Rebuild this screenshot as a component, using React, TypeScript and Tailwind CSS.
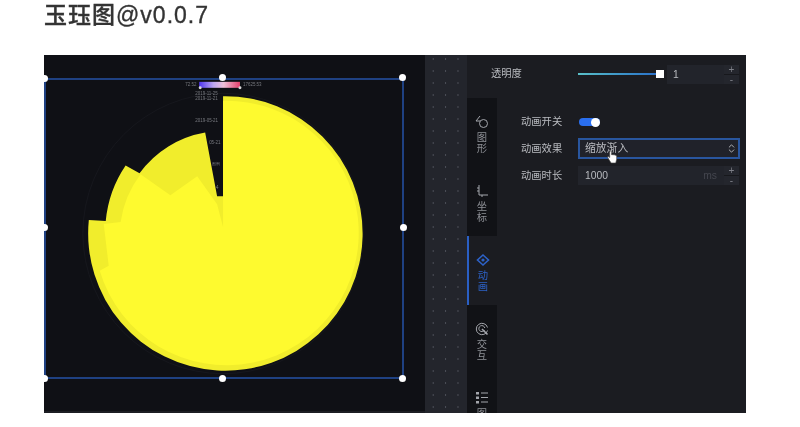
import React from "react";
import { ChevronsUpDown } from "lucide-react";

const handles = [
  "left-[-5px] top-[-5px]",
  "left-[173px] top-[-6px]",
  "right-[-4px] top-[-6px]",
  "left-[-5px] top-[144px]",
  "right-[-5px] top-[144px]",
  "left-[-5px] bottom-[-5px]",
  "left-[173px] bottom-[-5px]",
  "right-[-4px] bottom-[-5px]",
];

const ChartDrawing = () => (
  <svg viewBox="44 55 381 358" className="absolute inset-0 h-full w-full">
    <defs>
      <linearGradient id="legend" x1="0" x2="1" y1="0" y2="0">
        <stop offset="0" stopColor="#4f35ee" />
        <stop offset="0.35" stopColor="#bda6f0" />
        <stop offset="0.6" stopColor="#efc0d8" />
        <stop offset="1" stopColor="#e6406c" />
      </linearGradient>
    </defs>
    <circle cx="223" cy="234.5" r="141" fill="none" stroke="#16171d" strokeWidth="1" />
    <path
      d="M223 197 L223 96.5 A138 138 0 1 1 88 221 L105 222 A119 119 0 0 1 125 166 L139 174 A103 103 0 0 1 205 133 L217 197 Z"
      fill="#f1ed2c"
    />
    <path
      d="M223 228 L223 101 A133 133 0 1 1 99 272 L108 267 L103 225 L120 223 A104 104 0 0 1 140 175 L170 196 L197 177 L217 205 Z"
      fill="#fefa2f"
    />
    <rect x="199" y="82" width="41" height="6" fill="url(#legend)" />
    <circle cx="200" cy="88" r="1.5" fill="#d8d8d8" />
    <circle cx="240" cy="88" r="1.5" fill="#d8d8d8" />
    <g fill="#77797f" fontSize="4.5" fontFamily="'Liberation Sans', sans-serif">
      <text x="185" y="86.5">72.52</text>
      <text x="243" y="86.5">17625.53</text>
      <text x="195" y="95.5">2019-11-25</text>
      <text x="195" y="100.5">2019-11-21</text>
      <text x="195" y="122.5">2019-05-21</text>
      <text x="209" y="145">05-21</text>
      <text x="212" y="166">图例</text>
      <text x="216" y="189.5">4</text>
    </g>
  </svg>
);

const ShapeIcon = () => (
  <svg viewBox="0 0 14 14" className="h-[14px] w-[14px]" fill="none" stroke="#a4a6ac" strokeWidth="1">
    <path d="M5 1 L1 6 H5" />
    <circle cx="8.5" cy="8.5" r="4" />
  </svg>
);

const AxisIcon = () => (
  <svg viewBox="0 0 14 14" className="h-[14px] w-[14px]" fill="none" stroke="#a4a6ac" strokeWidth="1">
    <path d="M4 1 V11 H13 M2 4 H4 M2 7 H4 M7 11 V13" />
  </svg>
);

const MotionIcon = () => (
  <svg viewBox="0 0 14 14" className="h-[14px] w-[14px]" fill="none" stroke="#2d62c8" strokeWidth="1.6">
    <path d="M7 2 L12.5 7 L7 12 L1.5 7 Z" />
    <circle cx="7" cy="7" r="1.6" fill="#2d62c8" stroke="none" />
  </svg>
);

const TargetIcon = () => (
  <svg viewBox="0 0 14 14" className="h-[14px] w-[14px]" fill="none" stroke="#a4a6ac" strokeWidth="1">
    <path d="M12.5 8.5 A5.7 5.7 0 1 1 12.5 5.5" />
    <path d="M9.5 8 A3 3 0 1 1 9.8 6" />
    <path d="M7 7 L12.5 12.5" strokeWidth="1.6" />
  </svg>
);

const ListIcon = () => (
  <svg viewBox="0 0 14 14" className="h-[14px] w-[14px]" fill="#a4a6ac">
    <rect x="1" y="1" width="3" height="2.5" />
    <rect x="6" y="1.5" width="7" height="1" />
    <rect x="1" y="5.5" width="3" height="2.5" />
    <rect x="6" y="6" width="7" height="1" />
    <rect x="1" y="10" width="3" height="2.5" />
    <rect x="6" y="10.5" width="7" height="1" />
  </svg>
);

const HandCursor = () => (
  <svg viewBox="0 0 14 15" className="absolute left-[26px] top-[10px] h-[14px] w-[13px]">
    <path
      d="M4.5 1 L5.5 1 L6 2 V5 L7.5 5 L9 5.2 L10.5 5.5 L11.5 6.5 V10 L10.5 14 H5.5 L3 10 L1.5 7.5 L2.5 7 L4 8 V2 Z"
      fill="#ffffff"
      stroke="#444444"
      strokeWidth="0.7"
    />
  </svg>
);

const tabs = [
  { label: "图形", icon: <ShapeIcon />, active: false },
  { label: "坐标", icon: <AxisIcon />, active: false },
  { label: "动画", icon: <MotionIcon />, active: true },
  { label: "交互", icon: <TargetIcon />, active: false },
  { label: "图例", icon: <ListIcon />, active: false },
];

const Stepper = () => (
  <div className="flex w-[15px] flex-col bg-[#24262d] text-center text-[10px] leading-[9px] text-[#7d7f87]">
    <span className="flex-1 border-b border-[#17181c]">+</span>
    <span className="flex-1">-</span>
  </div>
);

export default function App() {
  return (
    <div className="h-[427px] w-[800px] overflow-hidden bg-white font-['Liberation_Sans','Noto_Sans_CJK_SC',sans-serif] blur-[0.4px]">
      <h1 className="ml-[44px] h-[55px] text-[23px] leading-[30px] font-medium tracking-[1px] text-[#333333] [-webkit-text-stroke:0.35px_#333333]">
        玉珏图@v0.0.7
      </h1>

      <div className="ml-[44px] flex h-[358px] w-[702px] overflow-hidden">
        <div className="relative w-[381px] border-b-[2px] border-[#1c1d23] bg-[#0f1015]">
          <ChartDrawing />
          <div className="absolute left-[0px] top-[23px] h-[301px] w-[360px] border-2 border-[#1f4182]">
            {handles.map((pos) => (
              <span key={pos} className={`absolute h-[7px] w-[7px] rounded-full bg-white ${pos}`} />
            ))}
          </div>
        </div>

        <div className="w-[42px] bg-[#23252c] bg-[radial-gradient(circle,#4d5059_0.8px,transparent_1px)] bg-[size:12.4px_12px] bg-[position:2px_-2px]" />

        <div className="flex flex-1 flex-col bg-[#1b1c21] text-[10.3px] text-[#b9bbc0]">
          <div className="flex h-[43px] shrink-0 items-center pb-[5px]">
            <span className="ml-[24px] w-[87px]">透明度</span>
            <div className="relative h-[2.5px] w-[82px] bg-gradient-to-r from-[#5bc0c8] to-[#2a6cc9]">
              <span className="absolute right-[-4px] top-[-3px] h-[8px] w-[8px] bg-white" />
            </div>
            <div className="ml-[7px] flex h-[19px] w-[72px]">
              <div className="flex-1 bg-[#22242b] pl-[6px] leading-[19px]">1</div>
              <Stepper />
            </div>
          </div>

          <div className="flex min-h-0 flex-1">
            <div className="w-[30px] shrink-0 overflow-hidden bg-[#111216]">
              {tabs.map((tab) => (
                <div
                  key={tab.label}
                  className={
                    tab.active
                      ? "flex h-[69px] flex-col items-center gap-[3px] border-l-2 border-[#2a5fc4] bg-[#1b1c21] pt-[17px] text-[#2d62c8]"
                      : "flex h-[69px] flex-col items-center gap-[3px] pt-[17px] text-[#8f9197]"
                  }
                >
                  {tab.icon}
                  <span className="w-[11px] text-center leading-[11px]">{tab.label}</span>
                </div>
              ))}
            </div>

            <div className="flex flex-col pl-[24px] pt-[10px]">
              <div className="flex h-[27px] items-center pt-[1px]">
                <span className="w-[58px]">动画开关</span>
                <div className="relative h-[8px] w-[21px] rounded-full bg-[#2a6ff0]">
                  <span className="absolute right-0 top-[-0.5px] h-[9px] w-[9px] rounded-full bg-white" />
                </div>
              </div>
              <div className="flex h-[27px] items-center">
                <span className="w-[57px]">动画效果</span>
                <div className="relative flex h-[21px] w-[162px] items-center justify-between border-2 border-[#29569f] bg-[#20222a] pl-[5px] pr-[1px] text-[10.8px]">
                  <span>缩放渐入</span>
                  <ChevronsUpDown size={11} strokeWidth={2} className="text-[#b9bbc0]" />
                  <HandCursor />
                </div>
              </div>
              <div className="flex h-[27px] items-center">
                <span className="w-[57px]">动画时长</span>
                <div className="flex h-[19px] w-[161px]">
                  <div className="flex flex-1 items-center justify-between bg-[#22242b] px-[7px]">
                    <span>1000</span>
                    <span className="text-[#44464e]">ms</span>
                  </div>
                  <Stepper />
                </div>
              </div>
            </div>
          </div>
        </div>
      </div>
    </div>
  );
}
